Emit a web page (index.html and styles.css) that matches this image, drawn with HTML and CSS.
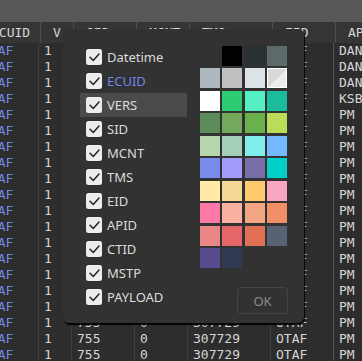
FILE: index.html
```html
<!DOCTYPE html>
<html>
<head>
<meta charset="utf-8">
<link rel="stylesheet" href="styles.css">
</head>
<body>
<div class="topbar"></div>
<div class="view">
  <div class="row head">
    <div class="cell c-ecuid">ECUID</div>
    <div class="cell c-vers">V.</div>
    <div class="cell c-sid">SID</div>
    <div class="cell c-mcnt">MCNT</div>
    <div class="cell c-tms">TMS</div>
    <div class="cell c-eid">EID</div>
    <div class="cell c-ap">APID</div>
  </div>
  <div class="rows">
    <div class="row"><div class="cell c-ecuid ecu">OTAF</div><div class="cell c-vers">1</div><div class="cell c-sid">755</div><div class="cell c-mcnt">0</div><div class="cell c-tms">307729</div><div class="cell c-eid">OTAF</div><div class="cell c-ap">DANA</div></div>
    <div class="row"><div class="cell c-ecuid ecu">OTAF</div><div class="cell c-vers">1</div><div class="cell c-sid">755</div><div class="cell c-mcnt">0</div><div class="cell c-tms">307729</div><div class="cell c-eid">OTAF</div><div class="cell c-ap">DANA</div></div>
    <div class="row"><div class="cell c-ecuid ecu">OTAF</div><div class="cell c-vers">1</div><div class="cell c-sid">755</div><div class="cell c-mcnt">0</div><div class="cell c-tms">307729</div><div class="cell c-eid">OTAF</div><div class="cell c-ap">DANA</div></div>
    <div class="row"><div class="cell c-ecuid ecu">OTAF</div><div class="cell c-vers">1</div><div class="cell c-sid">755</div><div class="cell c-mcnt">0</div><div class="cell c-tms">307729</div><div class="cell c-eid">OTAF</div><div class="cell c-ap">KSBS</div></div>
    <div class="row"><div class="cell c-ecuid ecu">OTAF</div><div class="cell c-vers">1</div><div class="cell c-sid">755</div><div class="cell c-mcnt">0</div><div class="cell c-tms">307729</div><div class="cell c-eid">OTAF</div><div class="cell c-ap">PM</div></div>
    <div class="row"><div class="cell c-ecuid ecu">OTAF</div><div class="cell c-vers">1</div><div class="cell c-sid">755</div><div class="cell c-mcnt">0</div><div class="cell c-tms">307729</div><div class="cell c-eid">OTAF</div><div class="cell c-ap">PM</div></div>
    <div class="row"><div class="cell c-ecuid ecu">OTAF</div><div class="cell c-vers">1</div><div class="cell c-sid">755</div><div class="cell c-mcnt">0</div><div class="cell c-tms">307729</div><div class="cell c-eid">OTAF</div><div class="cell c-ap">PM</div></div>
    <div class="row"><div class="cell c-ecuid ecu">OTAF</div><div class="cell c-vers">1</div><div class="cell c-sid">755</div><div class="cell c-mcnt">0</div><div class="cell c-tms">307729</div><div class="cell c-eid">OTAF</div><div class="cell c-ap">PM</div></div>
    <div class="row"><div class="cell c-ecuid ecu">OTAF</div><div class="cell c-vers">1</div><div class="cell c-sid">755</div><div class="cell c-mcnt">0</div><div class="cell c-tms">307729</div><div class="cell c-eid">OTAF</div><div class="cell c-ap">PM</div></div>
    <div class="row"><div class="cell c-ecuid ecu">OTAF</div><div class="cell c-vers">1</div><div class="cell c-sid">755</div><div class="cell c-mcnt">0</div><div class="cell c-tms">307729</div><div class="cell c-eid">OTAF</div><div class="cell c-ap">PM</div></div>
    <div class="row"><div class="cell c-ecuid ecu">OTAF</div><div class="cell c-vers">1</div><div class="cell c-sid">755</div><div class="cell c-mcnt">0</div><div class="cell c-tms">307729</div><div class="cell c-eid">OTAF</div><div class="cell c-ap">PM</div></div>
    <div class="row"><div class="cell c-ecuid ecu">OTAF</div><div class="cell c-vers">1</div><div class="cell c-sid">755</div><div class="cell c-mcnt">0</div><div class="cell c-tms">307729</div><div class="cell c-eid">OTAF</div><div class="cell c-ap">PM</div></div>
    <div class="row"><div class="cell c-ecuid ecu">OTAF</div><div class="cell c-vers">1</div><div class="cell c-sid">755</div><div class="cell c-mcnt">0</div><div class="cell c-tms">307729</div><div class="cell c-eid">OTAF</div><div class="cell c-ap">PM</div></div>
    <div class="row"><div class="cell c-ecuid ecu">OTAF</div><div class="cell c-vers">1</div><div class="cell c-sid">755</div><div class="cell c-mcnt">0</div><div class="cell c-tms">307729</div><div class="cell c-eid">OTAF</div><div class="cell c-ap">PM</div></div>
    <div class="row"><div class="cell c-ecuid ecu">OTAF</div><div class="cell c-vers">1</div><div class="cell c-sid">755</div><div class="cell c-mcnt">0</div><div class="cell c-tms">307729</div><div class="cell c-eid">OTAF</div><div class="cell c-ap">PM</div></div>
    <div class="row"><div class="cell c-ecuid ecu">OTAF</div><div class="cell c-vers">1</div><div class="cell c-sid">755</div><div class="cell c-mcnt">0</div><div class="cell c-tms">307729</div><div class="cell c-eid">OTAF</div><div class="cell c-ap">PM</div></div>
    <div class="row"><div class="cell c-ecuid ecu">OTAF</div><div class="cell c-vers">1</div><div class="cell c-sid">755</div><div class="cell c-mcnt">0</div><div class="cell c-tms">307729</div><div class="cell c-eid">OTAF</div><div class="cell c-ap">PM</div></div>
    <div class="row"><div class="cell c-ecuid ecu">OTAF</div><div class="cell c-vers">1</div><div class="cell c-sid">755</div><div class="cell c-mcnt">0</div><div class="cell c-tms">307729</div><div class="cell c-eid">OTAF</div><div class="cell c-ap">PM</div></div>
    <div class="row"><div class="cell c-ecuid ecu">OTAF</div><div class="cell c-vers">1</div><div class="cell c-sid">755</div><div class="cell c-mcnt">0</div><div class="cell c-tms">307729</div><div class="cell c-eid">OTAF</div><div class="cell c-ap">PM</div></div>
    <div class="row"><div class="cell c-ecuid ecu">OTAF</div><div class="cell c-vers">1</div><div class="cell c-sid">755</div><div class="cell c-mcnt">0</div><div class="cell c-tms">307729</div><div class="cell c-eid">OTAF</div><div class="cell c-ap">PM</div></div>
  </div>

  <div class="dialog">
    <div class="list">
      <div class="item"><svg class="cb" viewBox="0 0 16 16"><rect x="0" y="0" width="16" height="16" rx="2.5"/><path d="M4 8.2 L7.3 11.5 L13 5"/></svg><span>Datetime</span></div>
      <div class="item blue"><svg class="cb" viewBox="0 0 16 16"><rect x="0" y="0" width="16" height="16" rx="2.5"/><path d="M4 8.2 L7.3 11.5 L13 5"/></svg><span>ECUID</span></div>
      <div class="item hl"><svg class="cb" viewBox="0 0 16 16"><rect x="0" y="0" width="16" height="16" rx="2.5"/><path d="M4 8.2 L7.3 11.5 L13 5"/></svg><span>VERS</span></div>
      <div class="item"><svg class="cb" viewBox="0 0 16 16"><rect x="0" y="0" width="16" height="16" rx="2.5"/><path d="M4 8.2 L7.3 11.5 L13 5"/></svg><span>SID</span></div>
      <div class="item"><svg class="cb" viewBox="0 0 16 16"><rect x="0" y="0" width="16" height="16" rx="2.5"/><path d="M4 8.2 L7.3 11.5 L13 5"/></svg><span>MCNT</span></div>
      <div class="item"><svg class="cb" viewBox="0 0 16 16"><rect x="0" y="0" width="16" height="16" rx="2.5"/><path d="M4 8.2 L7.3 11.5 L13 5"/></svg><span>TMS</span></div>
      <div class="item"><svg class="cb" viewBox="0 0 16 16"><rect x="0" y="0" width="16" height="16" rx="2.5"/><path d="M4 8.2 L7.3 11.5 L13 5"/></svg><span>EID</span></div>
      <div class="item"><svg class="cb" viewBox="0 0 16 16"><rect x="0" y="0" width="16" height="16" rx="2.5"/><path d="M4 8.2 L7.3 11.5 L13 5"/></svg><span>APID</span></div>
      <div class="item"><svg class="cb" viewBox="0 0 16 16"><rect x="0" y="0" width="16" height="16" rx="2.5"/><path d="M4 8.2 L7.3 11.5 L13 5"/></svg><span>CTID</span></div>
      <div class="item"><svg class="cb" viewBox="0 0 16 16"><rect x="0" y="0" width="16" height="16" rx="2.5"/><path d="M4 8.2 L7.3 11.5 L13 5"/></svg><span>MSTP</span></div>
      <div class="item"><svg class="cb" viewBox="0 0 16 16"><rect x="0" y="0" width="16" height="16" rx="2.5"/><path d="M4 8.2 L7.3 11.5 L13 5"/></svg><span>PAYLOAD</span></div>
    </div>
    <div class="side">
      <div class="swatches">
        <div class="sw empty"></div>
        <div class="sw" style="background:#000000"></div>
        <div class="sw" style="background:#2a3133"></div>
        <div class="sw" style="background:#5e696c"></div>
        <div class="sw" style="background:#adb8bf"></div>
        <div class="sw" style="background:#c0c0c0"></div>
        <div class="sw" style="background:#dbe3e6"></div>
        <div class="sw sel"></div>
        <div class="sw" style="background:#ffffff"></div>
        <div class="sw" style="background:#2ecc71"></div>
        <div class="sw" style="background:#55efc4"></div>
        <div class="sw" style="background:#1abc9c"></div>
        <div class="sw" style="background:#5b8c5a"></div>
        <div class="sw" style="background:#74a95c"></div>
        <div class="sw" style="background:#6ab04c"></div>
        <div class="sw" style="background:#badc58"></div>
        <div class="sw" style="background:#b6d7ae"></div>
        <div class="sw" style="background:#a2d0b6"></div>
        <div class="sw" style="background:#81ecec"></div>
        <div class="sw" style="background:#74b9ff"></div>
        <div class="sw" style="background:#778beb"></div>
        <div class="sw" style="background:#a29bfe"></div>
        <div class="sw" style="background:#786fa6"></div>
        <div class="sw" style="background:#00cec9"></div>
        <div class="sw" style="background:#ffeaa7"></div>
        <div class="sw" style="background:#f7d794"></div>
        <div class="sw" style="background:#fdcb6e"></div>
        <div class="sw" style="background:#f8a5c2"></div>
        <div class="sw" style="background:#fd79a8"></div>
        <div class="sw" style="background:#fab1a0"></div>
        <div class="sw" style="background:#f3a683"></div>
        <div class="sw" style="background:#f19066"></div>
        <div class="sw" style="background:#ea8685"></div>
        <div class="sw" style="background:#e66767"></div>
        <div class="sw" style="background:#e17055"></div>
        <div class="sw" style="background:#596275"></div>
        <div class="sw" style="background:#574b90"></div>
        <div class="sw" style="background:#303952"></div>
      </div>
      <button class="ok">OK</button>
    </div>
  </div>
</div>
</body>
</html>
```
FILE: styles.css
```css
html, body {
  margin: 0;
  padding: 0;
  background: #2d2d2d;
  overflow: hidden;
  width: 362px;
  height: 361px;
}
.topbar {
  height: 22px;
  background: #585858;
}
.view {
  position: relative;
  height: 339px;
  overflow: hidden;
}
.row {
  display: flex;
  height: 16px;
  font-family: "DejaVu Sans Mono", monospace;
  font-size: 13px;
  line-height: 16px;
  color: #d6d6d6;
  white-space: nowrap;
}
.row.head {
  height: 21px;
  line-height: 21px;
  background: #353535;
  margin-left: -21px;
}
.rows {
  margin-left: -23px;
}
.cell {
  box-sizing: border-box;
  flex: none;
  overflow: hidden;
  padding-left: 5px;
  border-right: 1px solid #3d3d3d;
}
.head .cell {
  padding-left: 12px;
  border-right-color: #4c4c4c;
}
.c-ecuid { width: 62px; }
.c-vers { width: 33px; }
.c-sid { width: 63px; }
.c-mcnt { width: 53px; }
.c-tms { width: 83px; }
.c-eid { width: 63px; }
.c-ap { flex: 1; border-right: none; }
.rows .c-eid { border-right-color: #555; }
.ecu { color: #7387ea; }

.dialog {
  position: absolute;
  left: 63px;
  top: 7px;
  width: 241px;
  height: 294px;
  box-sizing: border-box;
  padding: 16px 17px 9px 17px;
  background: #323232;
  border-radius: 6px;
  box-shadow: 1px 2px 1px rgba(0,0,0,0.95);
  display: flex;
  gap: 13px;
}
.list {
  width: 107px;
  display: flex;
  flex-direction: column;
}
.item {
  height: 24px;
  display: flex;
  align-items: center;
  gap: 5px;
  padding-left: 6px;
  font-family: "Noto Sans", sans-serif;
  font-size: 13px;
  color: #dcdcdc;
}
.item.hl { background: #4a4a4a; }
.item.blue { color: #6f86e4; }
.cb {
  width: 16px;
  height: 16px;
  flex: none;
}
.cb rect { fill: #ececec; }
.cb path {
  fill: none;
  stroke: #2b2b2b;
  stroke-width: 1.6;
  stroke-linecap: round;
  stroke-linejoin: round;
}
.side {
  width: 87px;
  display: flex;
  flex-direction: column;
  align-items: flex-end;
  justify-content: space-between;
  padding-top: 1px;
}
.swatches {
  display: grid;
  grid-template-columns: repeat(4, 20px);
  grid-auto-rows: 20px;
  gap: 2.45px 2.33px;
}
.sw.empty { background: transparent; }
.sw.sel {
  box-sizing: border-box;
  border: 1px solid #ffffff;
  background: linear-gradient(to bottom right, #d9d9d9 50%, #ebebeb 50%);
}
.ok {
  width: 51px;
  height: 27px;
  margin-right: -1px;
  background: #323232;
  border: 1px solid #464646;
  border-radius: 4px;
  color: #8a8a8a;
  font-family: "Noto Sans", sans-serif;
  font-size: 13px;
  padding: 0;
}
```
